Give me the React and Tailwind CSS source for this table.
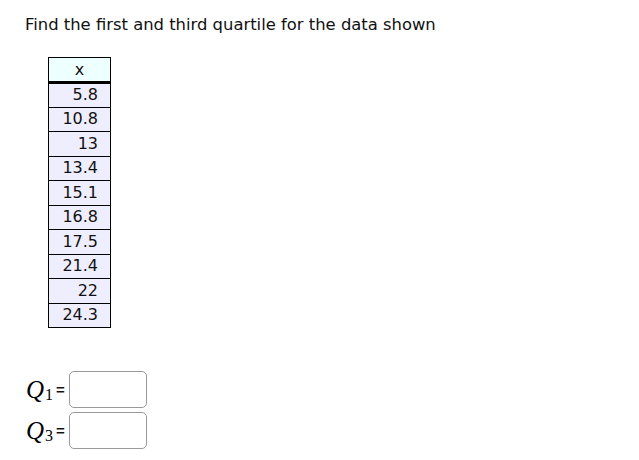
import React from "react";

const data = ["5.8", "10.8", "13", "13.4", "15.1", "16.8", "17.5", "21.4", "22", "24.3"];

function Answer({ sub }) {
  return (
    <div className="flex items-center h-[37px]">
      <span className="w-[32px] pl-[2px] text-[25px] italic leading-none text-black" style={{ fontFamily: '"Liberation Serif", serif' }}>
        Q<span className="ml-px not-italic text-[16px] relative top-[2px]">{sub}</span>
      </span>
      <span className="w-[13px] text-[15px] font-bold leading-none" style={{ fontFamily: '"Liberation Sans", sans-serif' }}>=</span>
      <input className="w-[78px] h-[37px] rounded-[5px] border border-[#999] bg-white outline-none" />
    </div>
  );
}

export default function App() {
  return (
    <div className="min-h-[460px] w-[639px] bg-white pl-[25px] pt-[15px] text-[#111] text-[16px]" style={{ fontFamily: '"DejaVu Sans", sans-serif' }}>
      <p className="text-[16.4px] leading-5">Find the first and third quartile for the data shown</p>

      {/* tabla de datos */}
      <table className="ml-[23px] mt-[22px] w-[63px] border-collapse border border-black">
        <thead>
          <tr>
            <th className="h-[25px] border-b-[3px] border-black bg-[#eeffff] text-center font-normal leading-none">x</th>
          </tr>
        </thead>
        <tbody>
          {data.map((v) => (
            <tr key={v}>
              <td className="h-[24.5px] border-b border-black bg-[#eeeeff] pr-3 text-right leading-none">{v}</td>
            </tr>
          ))}
        </tbody>
      </table>

      <div className="mt-[43px] -ml-px flex flex-col gap-[4px]">
        <Answer sub="1" />
        <Answer sub="3" />
      </div>
    </div>
  );
}
